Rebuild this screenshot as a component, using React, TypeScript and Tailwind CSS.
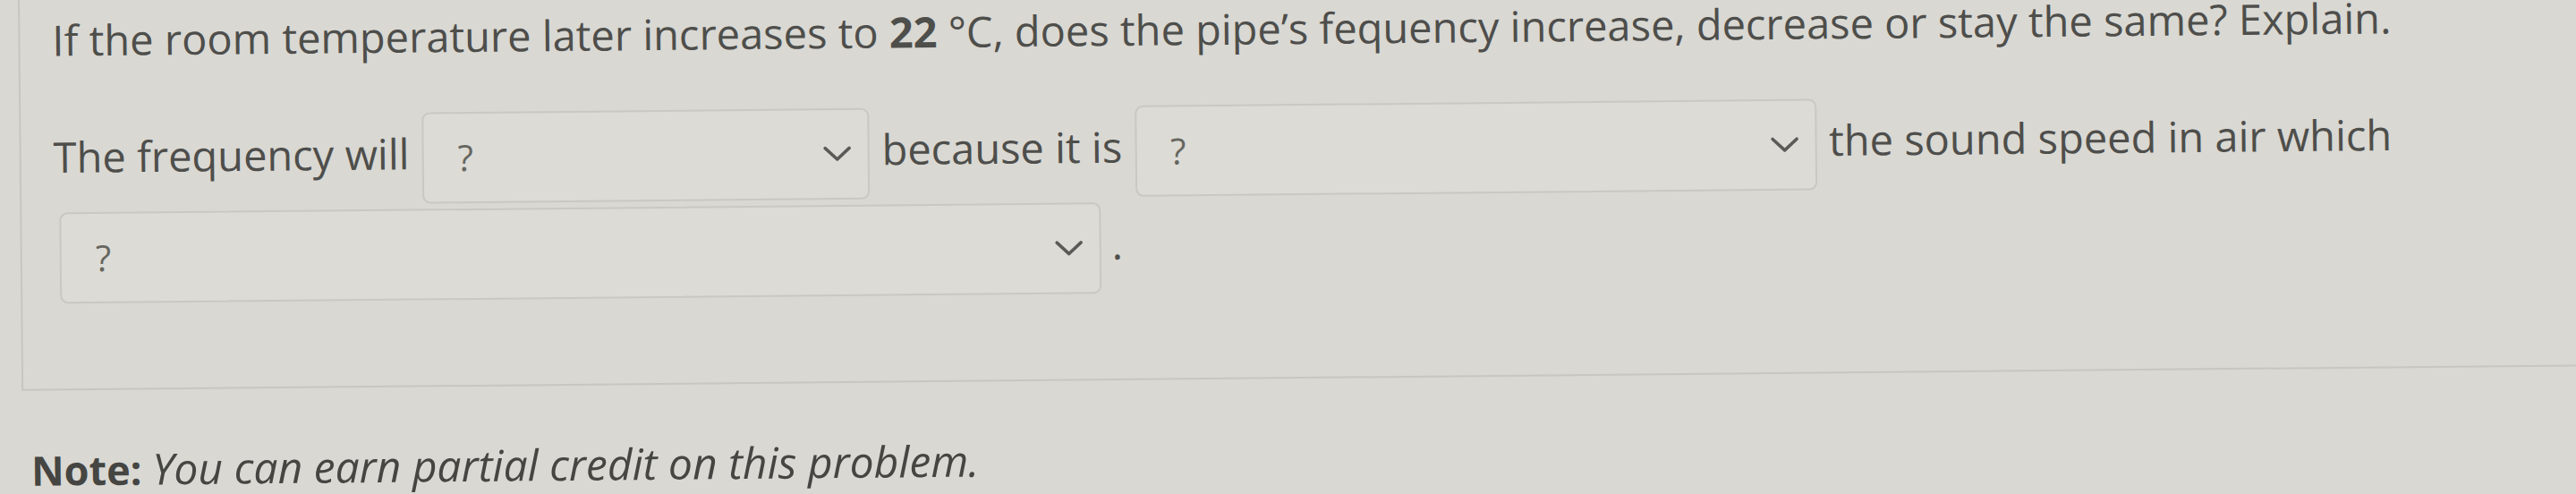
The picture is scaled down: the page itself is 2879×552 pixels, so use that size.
import React from "react";

function Chevron() {
  return (
    <svg width="32" height="18" viewBox="0 0 32 18" className="shrink-0">
      <polyline points="2.5,2.5 16,15 29.5,2.5" fill="none" stroke="#5a5a58" strokeWidth="3.6" strokeLinecap="round" strokeLinejoin="round" />
    </svg>
  );
}

function Dropdown({ w, m }: { w: string; m: string }) {
  return (
    <span
      className={`inline-flex ${w} ${m} h-[102px] my-[3px] items-center justify-between rounded-[9px] border-2 border-[#c9c8c3] bg-[#dcdbd6] pl-[38px] pr-[18px] align-middle text-[#66665f]`}
    >
      <span className="text-[40px] leading-none">?</span>
      <Chevron />
    </span>
  );
}

export default function App() {
  return (
    <div className="h-[552px] w-full overflow-hidden bg-[#d9d8d3]" style={{ fontFamily: '"Open Sans", "Noto Sans", sans-serif' }}>
      <div className="origin-top-left rotate-[-0.55deg] text-[#4e4e4b]">
        <div className="ml-[20px] border-b-2 border-l-2 border-[#c7c6c1] pl-[36px] pr-[10px] pt-[27px] pb-[92px]">
          <p className="text-[47px] leading-[36px] whitespace-nowrap">
            If the room temperature later increases to <span className="font-bold">22</span> °C, does the pipe’s fequency increase, decrease or stay the same? Explain.
          </p>
          <p className="mt-[64px] text-[47px] leading-[63px]">
            The frequency will
            <Dropdown w="w-[500px]" m="mx-[14px]" />
            because it is
            <Dropdown w="w-[762px]" m="mx-[14px]" />
            the sound speed in air which
            <Dropdown w="w-[1164px]" m="ml-[6px] mr-[12px]" />
            .
          </p>
        </div>
        <p className="mt-[64px] pl-[30px] leading-[48px] whitespace-nowrap text-[#454542]">
          <span className="text-[45px] leading-[48px] font-bold">Note: </span>
          <span className="text-[48px] leading-[48px] italic">You can earn partial credit on this problem.</span>
        </p>
      </div>
    </div>
  );
}
